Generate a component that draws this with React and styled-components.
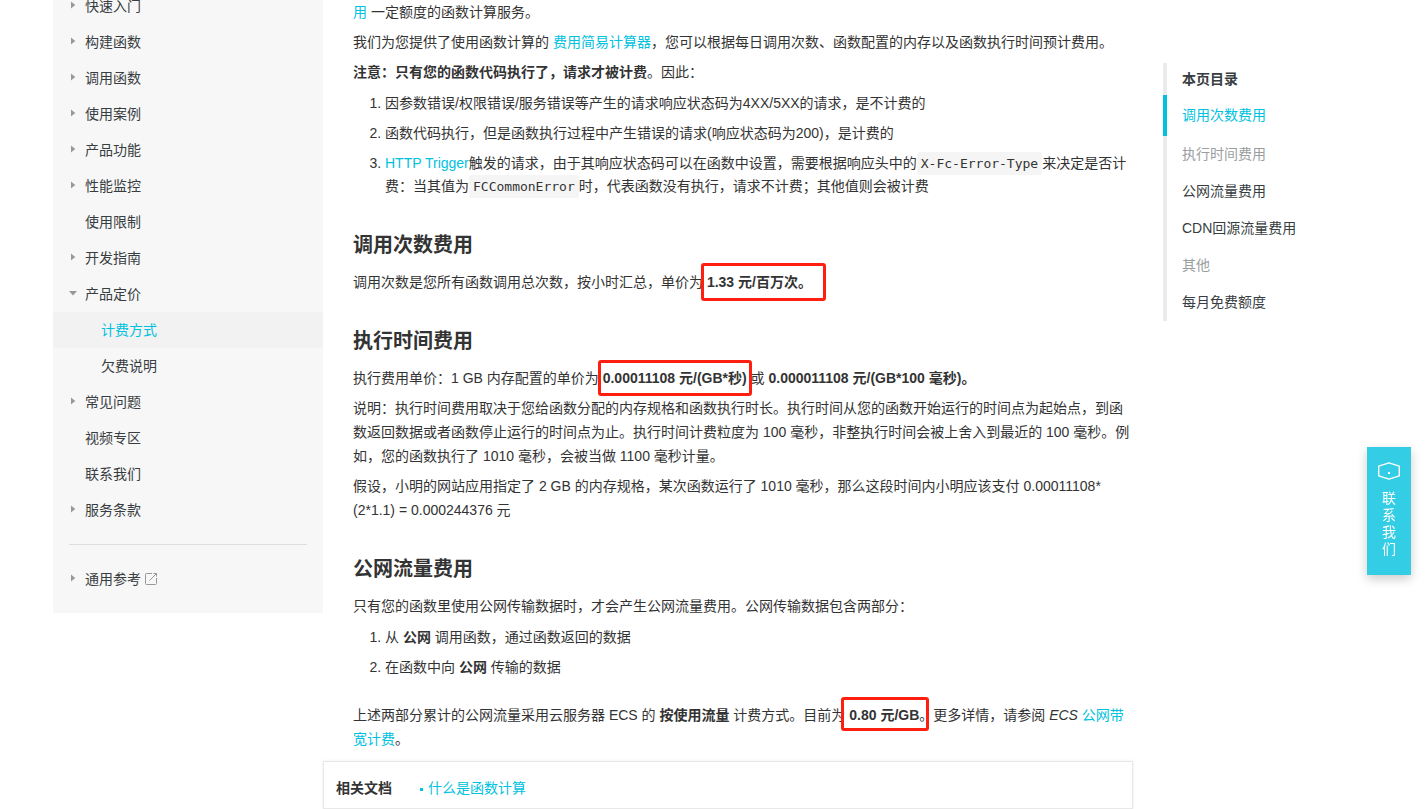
import React from "react";
import styled, { createGlobalStyle, css } from "styled-components";

const GlobalStyle = createGlobalStyle`
  *, *::before, *::after { box-sizing: border-box; }
  body {
    margin: 0;
    background: #fff;
    color: #333;
    font: 14px/24px "Liberation Sans", "Noto Sans CJK SC", sans-serif;
    text-spacing-trim: space-all;
  }
`;

const Page = styled.div`
  display: grid;
  grid-template-columns: 270px minmax(0, 1fr) 240px;
  align-items: start;
  max-width: 1320px;
  margin: 0 auto;
  overflow: hidden;
`;

const Sidebar = styled.nav`
  margin-top: -12px;
  padding-bottom: 16px;
  background: #f7f7f7;
`;

const NavRow = styled.a`
  display: flex;
  align-items: center;
  height: 36px;
  padding-left: ${(p) => (p.$nested ? 32 : 16)}px;
  color: ${(p) => (p.$active ? "#00c1de" : "#373d41")};
  background: ${(p) => (p.$active ? "#f2f2f2" : "transparent")};
  text-decoration: none;
`;

const ArrowSlot = styled.span`
  display: flex;
  width: 16px;
  padding-bottom: 2px;
`;

const NavDivider = styled.hr`
  height: 1px;
  margin: 16px;
  border: 0;
  background: #dedede;
`;

const ExternalIcon = styled.svg`
  margin-left: 4px;
`;

const Main = styled.main`
  min-width: 0;
`;

const Article = styled.article`
  padding-left: 30px;
`;

const Paragraph = styled.p`
  margin: 0 0 6px;
`;

const Heading = styled.h2`
  margin: 35px 0 13px;
  font-size: 20px;
  line-height: 24px;
  font-weight: 700;
`;

const List = styled.ol`
  margin: 8px 0 24px;
  padding-left: 32px;
  line-height: 23px;
`;

const ListItem = styled.li`
  & + & { margin-top: 7px; }
`;

const Link = styled.a`
  color: #00c1de;
  text-decoration: none;
`;

const Code = styled.code`
  padding: 4px;
  border-radius: 3px;
  background: #f5f5f5;
  font: 13px/16px "DejaVu Sans Mono", monospace;
`;

const Marked = styled.strong`
  position: relative;
  display: inline-block;
  &::after {
    content: "";
    position: absolute;
    inset: ${(p) => p.$inset};
    border: 3px solid #ff1f10;
    border-radius: 3px;
  }
`;

const Related = styled.section`
  display: flex;
  align-items: center;
  gap: 28px;
  margin-top: 10px;
  padding: 14px 12px 8px;
  border: 1px solid #e8e8e8;
  box-shadow: 0 0 3px rgba(0, 0, 0, 0.08);
`;

const RelatedLink = styled(Link)`
  display: flex;
  align-items: center;
  gap: 5px;
  &::before {
    content: "";
    width: 3px;
    height: 3px;
    margin-top: 3px;
    background: #00c1de;
  }
`;

const Toc = styled.nav`
  margin: 63px 0 0 30px;
`;

const tocEdge = css`
  display: block;
  padding-left: 15px;
  border-left: 4px solid ${(p) => (p.$active ? "#00c1de" : "#ebebeb")};
`;

const TocTitle = styled.strong`
  ${tocEdge}
  line-height: 32px;
  color: #373d41;
`;

const TocLink = styled.a`
  ${tocEdge}
  line-height: ${(p) => (p.$active ? 41 : 37)}px;
  color: ${(p) => (p.$active ? "#00c1de" : p.$muted ? "#9b9ea0" : "#373d41")};
  text-decoration: none;
`;

const ContactButton = styled.button`
  position: fixed;
  right: 15px;
  bottom: 234px;
  display: flex;
  flex-direction: column;
  align-items: center;
  gap: 10px;
  width: 44px;
  height: 128px;
  padding: 15px 0 0;
  border: 0;
  background: #33cde5;
  box-shadow: 0 4px 10px rgba(0, 0, 0, 0.2);
  color: #fff;
  font: inherit;
  line-height: 17px;
`;

const ContactLabel = styled.span`
  width: 14px;
`;

const navItems = [
  { label: "快速入门", arrow: "right" },
  { label: "构建函数", arrow: "right" },
  { label: "调用函数", arrow: "right" },
  { label: "使用案例", arrow: "right" },
  { label: "产品功能", arrow: "right" },
  { label: "性能监控", arrow: "right" },
  { label: "使用限制" },
  { label: "开发指南", arrow: "right" },
  { label: "产品定价", arrow: "down" },
  { label: "计费方式", nested: true, active: true },
  { label: "欠费说明", nested: true },
  { label: "常见问题", arrow: "right" },
  { label: "视频专区" },
  { label: "联系我们" },
  { label: "服务条款", arrow: "right" },
];

const tocItems = [
  { label: "调用次数费用", active: true },
  { label: "执行时间费用", muted: true },
  { label: "公网流量费用" },
  { label: "CDN回源流量费用" },
  { label: "其他", muted: true },
  { label: "每月免费额度" },
];

function Arrow({ direction }) {
  return (
    <ArrowSlot>
      {direction && (
        <svg width="8" height="8" viewBox="0 0 8 8" fill="#999" aria-hidden="true">
          <path d={direction === "down" ? "M0 2h8L4 6.5z" : "M2 .5v7L6.3 4z"} />
        </svg>
      )}
    </ArrowSlot>
  );
}

function NavItem({ label, arrow, nested, active, children }) {
  return (
    <NavRow href="#" $nested={nested} $active={active} aria-current={active ? "page" : undefined}>
      <Arrow direction={arrow} />
      {label}
      {children}
    </NavRow>
  );
}

export default function App() {
  return (
    <>
      <GlobalStyle />
      <Page>
        <Sidebar>
          {navItems.map((item) => (
            <NavItem key={item.label} {...item} />
          ))}
          <NavDivider />
          <NavItem label="通用参考" arrow="right">
            <ExternalIcon width="12" height="12" viewBox="0 0 12 12" fill="none" stroke="#999" aria-hidden="true">
              <path d="M7 .5H1.5a1 1 0 0 0-1 1v9a1 1 0 0 0 1 1h9a1 1 0 0 0 1-1V5M4.5 7.5l7-7M8.5.5h3v3" />
            </ExternalIcon>
          </NavItem>
        </Sidebar>

        <Main>
          <Article>
            <Paragraph>
              <Link href="#">用</Link> 一定额度的函数计算服务。
            </Paragraph>
            <Paragraph>
              我们为您提供了使用函数计算的 <Link href="#">费用简易计算器</Link>
              ，您可以根据每日调用次数、函数配置的内存以及函数执行时间预计费用。
            </Paragraph>
            <Paragraph>
              <strong>注意：只有您的函数代码执行了，请求才被计费</strong>。因此：
            </Paragraph>
            <List>
              <ListItem>因参数错误/权限错误/服务错误等产生的请求响应状态码为4XX/5XX的请求，是不计费的</ListItem>
              <ListItem>函数代码执行，但是函数执行过程中产生错误的请求(响应状态码为200)，是计费的</ListItem>
              <ListItem>
                <Link href="#">HTTP Trigger</Link>
                触发的请求，由于其响应状态码可以在函数中设置，需要根据响应头中的
                <Code>X-Fc-Error-Type</Code>
                来决定是否计费：当其值为
                <Code>FCCommonError</Code>
                时，代表函数没有执行，请求不计费；其他值则会被计费
              </ListItem>
            </List>

            <Heading>调用次数费用</Heading>
            <Paragraph>
              调用次数是您所有函数调用总次数，按小时汇总，单价为{" "}
              <Marked $inset="-7px -14px -7px -6px">1.33 元/百万次。</Marked>
            </Paragraph>

            <Heading>执行时间费用</Heading>
            <Paragraph>
              执行费用单价：1 GB 内存配置的单价为 <Marked $inset="-6px -5px">0.00011108 元/(GB*秒)</Marked> 或{" "}
              <strong>0.000011108 元/(GB*100 毫秒)。</strong>
            </Paragraph>
            <Paragraph>
              说明：执行时间费用取决于您给函数分配的内存规格和函数执行时长。执行时间从您的函数开始运行的时间点为起始点，到函数返回数据或者函数停止运行的时间点为止。执行时间计费粒度为
              100 毫秒，非整执行时间会被上舍入到最近的 100 毫秒。例如，您的函数执行了 1010 毫秒，会被当做 1100
              毫秒计量。
            </Paragraph>
            <Paragraph>
              假设，小明的网站应用指定了 2 GB 的内存规格，某次函数运行了 1010 毫秒，那么这段时间内小明应该支付
              0.00011108*
              <wbr />
              (2*1.1) = 0.000244376 元
            </Paragraph>

            <Heading>公网流量费用</Heading>
            <Paragraph>只有您的函数里使用公网传输数据时，才会产生公网流量费用。公网传输数据包含两部分：</Paragraph>
            <List>
              <ListItem>
                从 <strong>公网</strong> 调用函数，通过函数返回的数据
              </ListItem>
              <ListItem>
                在函数中向 <strong>公网</strong> 传输的数据
              </ListItem>
            </List>
            <Paragraph>
              上述两部分累计的公网流量采用云服务器 ECS 的 <strong>按使用流量</strong> 计费方式。目前为{" "}
              <Marked $inset="-6px -10px -4px -8px">0.80 元/GB</Marked>。更多详情，请参阅 <em>ECS</em>{" "}
              <Link href="#">公网带宽计费</Link>。
            </Paragraph>
          </Article>

          <Related>
            <strong>相关文档</strong>
            <RelatedLink href="#">什么是函数计算</RelatedLink>
          </Related>
        </Main>

        <Toc>
          <TocTitle>本页目录</TocTitle>
          {tocItems.map((item) => (
            <TocLink key={item.label} href="#" $active={item.active} $muted={item.muted}>
              {item.label}
            </TocLink>
          ))}
        </Toc>
      </Page>

      <ContactButton type="button">
        <svg width="24" height="18" viewBox="0 0 24 18" fill="none" stroke="#fff" aria-hidden="true">
          <path d="M12 .8 22.3 4.2v9.6L12 17.2 1.7 13.8V4.2z" strokeWidth="1.4" strokeLinejoin="round" />
          <path d="M11 10h2v2h-2z" fill="#fff" stroke="none" />
        </svg>
        <ContactLabel>联系我们</ContactLabel>
      </ContactButton>
    </>
  );
}
